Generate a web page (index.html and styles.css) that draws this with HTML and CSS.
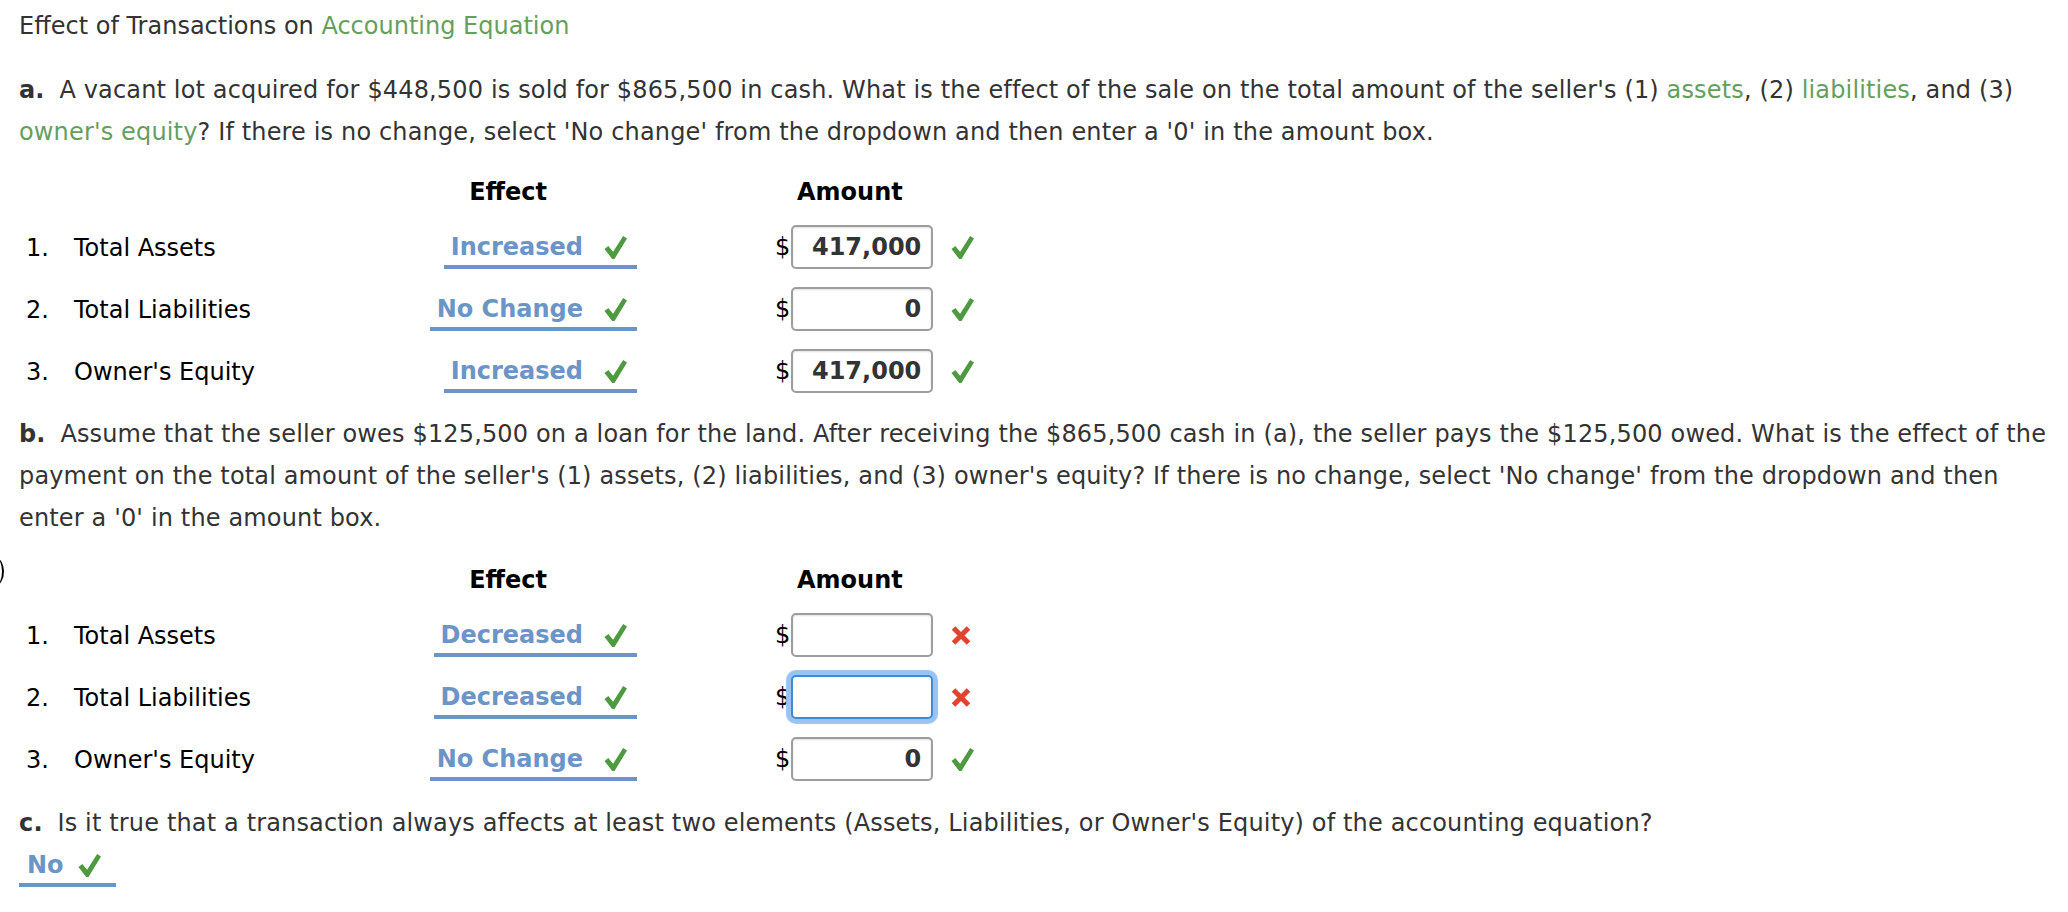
FILE: index.html
```html
<!DOCTYPE html>
<html lang="en">
<head>
    <meta charset="UTF-8">
    <meta name="viewport" content="width=device-width, initial-scale=1.0">
    <title>Effect of Transactions on Accounting Equation</title>
    <link rel="stylesheet" href="styles.css">
</head>
<body>
<div class="page">
    <h1 class="title">Effect of Transactions on <span class="term">Accounting Equation</span></h1>

    <p class="question"><b class="tag">a.</b> A vacant lot acquired for $448,500 is sold for $865,500 in cash. What is the effect of the sale on the total amount of the seller's (1) <span class="term">assets</span>, (2) <span class="term">liabilities</span>, and (3) <span class="term">owner's equity</span>? If there is no change, select 'No change' from the dropdown and then enter a '0' in the amount box.</p>

    <div class="grid">
        <div class="head">
            <div></div>
            <div></div>
            <div class="head-effect">Effect</div>
            <div class="head-amount">Amount</div>
        </div>
        <div class="line">
            <div class="num">1.</div>
            <div class="label">Total Assets</div>
            <div class="effect"><span class="pick">Increased<svg class="ok" viewBox="0 0 24 26"><path d="M0.5 14.5 L4.5 11.5 L9.5 17.5 L20 1 L24 3.5 L11 25 L8.5 25 Z"/></svg></span></div>
            <div class="amount">$<input class="box" type="text" value="417,000" readonly><svg class="ok" viewBox="0 0 24 26"><path d="M0.5 14.5 L4.5 11.5 L9.5 17.5 L20 1 L24 3.5 L11 25 L8.5 25 Z"/></svg></div>
        </div>
        <div class="line">
            <div class="num">2.</div>
            <div class="label">Total Liabilities</div>
            <div class="effect"><span class="pick">No Change<svg class="ok" viewBox="0 0 24 26"><path d="M0.5 14.5 L4.5 11.5 L9.5 17.5 L20 1 L24 3.5 L11 25 L8.5 25 Z"/></svg></span></div>
            <div class="amount">$<input class="box" type="text" value="0" readonly><svg class="ok" viewBox="0 0 24 26"><path d="M0.5 14.5 L4.5 11.5 L9.5 17.5 L20 1 L24 3.5 L11 25 L8.5 25 Z"/></svg></div>
        </div>
        <div class="line">
            <div class="num">3.</div>
            <div class="label">Owner's Equity</div>
            <div class="effect"><span class="pick">Increased<svg class="ok" viewBox="0 0 24 26"><path d="M0.5 14.5 L4.5 11.5 L9.5 17.5 L20 1 L24 3.5 L11 25 L8.5 25 Z"/></svg></span></div>
            <div class="amount">$<input class="box" type="text" value="417,000" readonly><svg class="ok" viewBox="0 0 24 26"><path d="M0.5 14.5 L4.5 11.5 L9.5 17.5 L20 1 L24 3.5 L11 25 L8.5 25 Z"/></svg></div>
        </div>
    </div>

    <p class="question part-b"><b class="tag">b.</b> Assume that the seller owes $125,500 on a loan for the land. After receiving the $865,500 cash in (a), the seller pays the $125,500 owed. What is the effect of the payment on the total amount of the seller's (1) assets, (2) liabilities, and (3) owner's equity? If there is no change, select 'No change' from the dropdown and then enter a '0' in the amount box.</p>

    <div class="grid grid-b">
        <div class="head">
            <span class="edge"></span>
            <div></div>
            <div></div>
            <div class="head-effect">Effect</div>
            <div class="head-amount">Amount</div>
        </div>
        <div class="line">
            <div class="num">1.</div>
            <div class="label">Total Assets</div>
            <div class="effect"><span class="pick">Decreased<svg class="ok" viewBox="0 0 24 26"><path d="M0.5 14.5 L4.5 11.5 L9.5 17.5 L20 1 L24 3.5 L11 25 L8.5 25 Z"/></svg></span></div>
            <div class="amount">$<input class="box" type="text" value="" readonly><svg class="bad" viewBox="0 0 20 19"><path d="M2.5 2 L17.5 17 M17.5 2 L2.5 17"/></svg></div>
        </div>
        <div class="line">
            <div class="num">2.</div>
            <div class="label">Total Liabilities</div>
            <div class="effect"><span class="pick">Decreased<svg class="ok" viewBox="0 0 24 26"><path d="M0.5 14.5 L4.5 11.5 L9.5 17.5 L20 1 L24 3.5 L11 25 L8.5 25 Z"/></svg></span></div>
            <div class="amount">$<input class="box focus" type="text" value="" readonly><svg class="bad" viewBox="0 0 20 19"><path d="M2.5 2 L17.5 17 M17.5 2 L2.5 17"/></svg></div>
        </div>
        <div class="line">
            <div class="num">3.</div>
            <div class="label">Owner's Equity</div>
            <div class="effect"><span class="pick">No Change<svg class="ok" viewBox="0 0 24 26"><path d="M0.5 14.5 L4.5 11.5 L9.5 17.5 L20 1 L24 3.5 L11 25 L8.5 25 Z"/></svg></span></div>
            <div class="amount">$<input class="box" type="text" value="0" readonly><svg class="ok" viewBox="0 0 24 26"><path d="M0.5 14.5 L4.5 11.5 L9.5 17.5 L20 1 L24 3.5 L11 25 L8.5 25 Z"/></svg></div>
        </div>
    </div>

    <p class="question part-c"><b class="tag">c.</b> Is it true that a transaction always affects at least two elements (Assets, Liabilities, or Owner's Equity) of the accounting equation?</p>
    <span class="pick pick-short">No<svg class="ok" viewBox="0 0 24 26"><path d="M0.5 14.5 L4.5 11.5 L9.5 17.5 L20 1 L24 3.5 L11 25 L8.5 25 Z"/></svg></span>
</div>
</body>
</html>
```

FILE: styles.css
```css
body{
    margin: 0;
    background: #fff;
    font-family: "DejaVu Sans", Verdana, sans-serif;
    font-size: 24px;
    color: #333;
}
.page{
    padding: 5px 4px 0 19px;
}
.title{
    margin: 0;
    font-size: 24px;
    font-weight: normal;
    line-height: 42px;
}
.term{
    color: #64a05c;
}
.question{
    margin: 22px 0 0;
    line-height: 42px;
    letter-spacing: 0.15px;
}
.tag{
    margin-right: 7px;
}
.part-b{
    margin-top: 20px;
}
.part-c{
    margin-top: 21px;
}
.grid{
    margin: 18px 0 0 7px;
    display: flex;
    flex-direction: column;
    gap: 18px;
    color: #000;
}
.grid-b{
    margin-top: 20px;
}
.head,
.line{
    display: grid;
    grid-template-columns: 48px 200px 363px auto;
}
.head{
    position: relative;
    height: 42px;
    line-height: 42px;
    font-weight: bold;
    margin-bottom: -6px;
}
.head-effect{
    text-align: right;
    padding-right: 90px;
}
.head-amount{
    padding-left: 160px;
}
.edge{
    position: absolute;
    left: -38px;
    top: -1px;
    width: 14px;
    height: 27px;
    border-right: 2px solid #000;
    border-radius: 50%;
}
.line{
    height: 44px;
}
.num,
.label{
    padding-top: 3px;
    line-height: 41px;
}
.effect{
    display: flex;
    justify-content: flex-end;
}
.pick{
    display: flex;
    align-items: center;
    box-sizing: border-box;
    height: 44px;
    padding: 4px 10px 0 7px;
    line-height: 36px;
    border-bottom: 4px solid #6a95c6;
    color: #6a95c6;
    font-weight: bold;
    white-space: nowrap;
}
.pick .ok{
    margin-left: 21px;
}
.pick-short{
    display: inline-flex;
    margin-top: -1px;
    padding-left: 8px;
    padding-right: 15px;
}
.pick-short .ok{
    margin-left: 14px;
}
.amount{
    display: flex;
    align-items: center;
    padding-left: 138px;
    line-height: 44px;
}
.box{
    box-sizing: border-box;
    width: 142px;
    height: 44px;
    margin: 0 0 0 1px;
    padding: 0 10px 0 4px;
    border: 2px solid #9d9d9d;
    border-radius: 5px;
    box-shadow: inset 0 1px 2px rgba(0,0,0,0.12);
    background: #fff;
    font-family: "DejaVu Sans", Verdana, sans-serif;
    font-size: 24px;
    font-weight: bold;
    color: #333;
    text-align: right;
    outline: none;
}
.box.focus{
    border-color: #3f8ad4;
    box-shadow: 0 0 1px 5px #9ac3f1;
}
.ok{
    width: 23px;
    height: 25px;
    fill: #4e9a40;
    flex: none;
}
.amount .ok{
    margin-left: 18px;
}
.bad{
    width: 20px;
    height: 19px;
    margin-left: 18px;
    stroke: #e5412f;
    stroke-width: 5;
    fill: none;
    flex: none;
}
```
